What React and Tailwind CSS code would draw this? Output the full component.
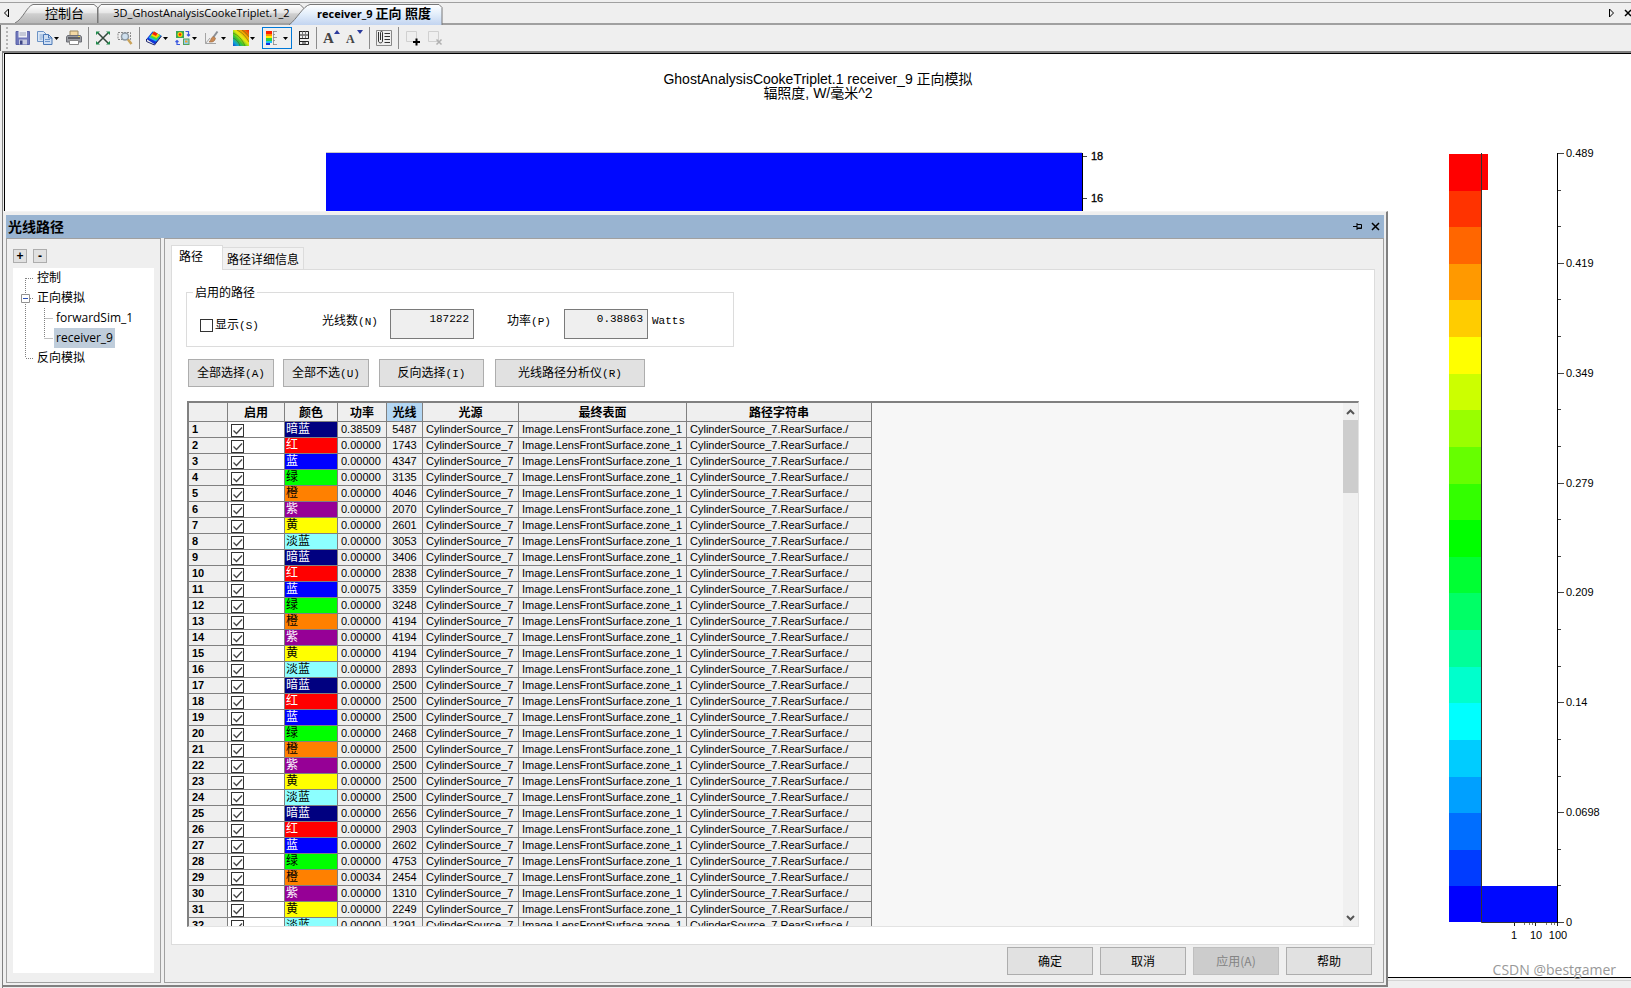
const COLORS = [
  { name: '暗蓝', cell: 'bg-[#000080] text-white' },
  { name: '红', cell: 'bg-[#ff0000] text-white' },
  { name: '蓝', cell: 'bg-[#0000ff] text-white' },
  { name: '绿', cell: 'bg-[#00ff00] text-black' },
  { name: '橙', cell: 'bg-[#ff8000] text-black' },
  { name: '紫', cell: 'bg-[#960096] text-white' },
  { name: '黄', cell: 'bg-[#ffff00] text-black' },
  { name: '淡蓝', cell: 'bg-[#8cffff] text-black' },
]

const RAYS = [
  5487, 1743, 4347, 3135, 4046, 2070, 2601, 3053, 3406, 2838, 3359, 3248, 4194, 4194, 4194, 2893,
  2500, 2500, 2500, 2468, 2500, 2500, 2500, 2500, 2656, 2903, 2602, 4753, 2454, 1310, 2249, 1291,
]

const POWER = { 1: '0.38509', 11: '0.00075', 29: '0.00034' }

const SCALE = [
  '#ff0000', '#ff3300', '#ff6600', '#ff9900', '#ffcc00', '#ffff00', '#ccff00',
  '#99ff00', '#66ff00', '#33ff00', '#00ff00', '#00ff33', '#00ff66', '#00ff99',
  '#00ffcc', '#00ffff', '#00ccff', '#00a0ff', '#006eff', '#003cff', '#0000ff',
]

const SCALE_LABELS = ['0.489', '0.419', '0.349', '0.279', '0.209', '0.14', '0.0698', '0']

function Caret() {
  return (
    <svg width="7" height="16" viewBox="0 0 7 16">
      <path d="M1 7h5L3.5 10z" fill="#000" />
    </svg>
  )
}

function SaveIcon() {
  return (
    <svg width="16" height="16" viewBox="0 0 16 16">
      <path d="M1 1.500h13.500v13H1z" fill="#6f77bb" stroke="#5a62a8" />
      <rect x="3.500" y="1" width="8.500" height="6.500" fill="#eef0f6" />
      <path d="M4.500 3h6.500M4.500 5h6.500" stroke="#9aa0b8" />
      <rect x="4" y="9.500" width="8" height="5" fill="#c9cce0" />
      <rect x="5" y="10.500" width="2.500" height="4" fill="#3e4685" />
    </svg>
  )
}

function CopyIcon() {
  return (
    <svg width="16" height="16" viewBox="0 0 16 16">
      <path d="M.5 1.500h6l3 3v7h-9z" fill="#dbe7f6" stroke="#6d94c6" />
      <path d="M2.500 5h4M2.500 7h4M2.500 9h3" stroke="#86a8d4" />
      <path d="M6.500 4.500h5l3.500 3.500v6.500H6.500z" fill="#cfdff4" stroke="#4a78b6" />
      <path d="M11.500 4.500V8H15" fill="none" stroke="#4a78b6" />
      <path d="M8 9.500h5M8 11.500h5" stroke="#6f97cc" />
    </svg>
  )
}

function PrinterIcon() {
  return (
    <svg width="16" height="16" viewBox="0 0 16 16">
      <path d="M4 1h8v5H4z" fill="#f3d9a4" stroke="#9b8a63" />
      <path d="M1.500 5.500h13l1 1.500v5H.5V7z" fill="#9a9ca2" stroke="#6d6f76" />
      <path d="M2 8h12" stroke="#4a4c52" strokeWidth="1.500" />
      <path d="M3.500 10.500h9v4h-9z" fill="#fff" stroke="#888" />
      <rect x="12" y="6" width="2" height="1" fill="#e6d25c" />
    </svg>
  )
}

function FitIcon() {
  return (
    <svg width="16" height="16" viewBox="0 0 16 16" fill="none">
      <path d="M3 3l10 10M13 3L3 13" stroke="#33483c" strokeWidth="1.500" />
      <path d="M1 1.500h4L1 5zM15 1.500V5l-4-3.500zM1 14.500V11l4 3.500zM15 14.500h-4l4-3.500z" fill="#1e8a4a" />
    </svg>
  )
}

function ZoomAreaIcon() {
  return (
    <svg width="16" height="16" viewBox="0 0 16 16" fill="none">
      <path d="M1 2.500h12.500v7H1z" stroke="#888" strokeDasharray="2 1" />
      <circle cx="8" cy="6.500" r="3.500" fill="#cfe0ee" stroke="#8d98a2" strokeWidth="1.500" />
      <path d="M11 9.500l3.500 4.500" stroke="#c9a35b" strokeWidth="2.500" />
    </svg>
  )
}

function SurfaceIcon() {
  return (
    <svg width="16" height="16" viewBox="0 0 16 16">
      <path d="M.5 9l6-7.500 9 4L9 14.500z" fill="#1233d6" />
      <path d="M2.500 8l5-6.500 7.500 4-5 6z" fill="#18b4f0" />
      <path d="M4 7l4-5.500 6.500 4L10.500 10z" fill="#3fdc3a" />
      <path d="M5 5.500l3-4 5.500 3.500-3 3z" fill="#ffd400" />
      <path d="M6 4l2-2.500 3.500 2L10 6z" fill="#f02010" />
      <path d="M.5 9v2.500l8 3.500 7-9" fill="none" stroke="#20286a" />
    </svg>
  )
}

function SpotsIcon() {
  return (
    <svg width="16" height="16" viewBox="0 0 16 16" fill="none">
      <rect x="1" y="1" width="8" height="7" fill="#3aa655" />
      <circle cx="5" cy="4.500" r="2.500" fill="#ffd000" />
      <circle cx="5" cy="4.500" r="1.200" fill="#f02010" />
      <rect x="8.500" y="9" width="5.500" height="5.500" fill="#8fd0ee" stroke="#58a058" />
      <rect x="10" y="10.500" width="2.500" height="2" fill="#f4a030" />
      <path d="M10.500 1.500h3v4M12 4.500l1.500 1.500 1.500-1.500M5 14.500H2v-4M.5 12L2 10.500 3.500 12" stroke="#3a58e0" strokeWidth="1.200" />
    </svg>
  )
}

function BrushIcon() {
  return (
    <svg width="16" height="16" viewBox="0 0 16 16" fill="none">
      <path d="M1.500 3v10.500H12M1.500 13.500L6 8" stroke="#a4a4a4" />
      <path d="M13.500 1.500L9.500 7" stroke="#8a8f96" strokeWidth="2" />
      <path d="M9 6.500l2.500 1.500c-.5 3.500-3 4.500-6.500 4 2-1 1.500-4 4-5.500z" fill="#c98a55" stroke="#8c5a34" strokeWidth=".5" />
    </svg>
  )
}

function ContourIcon() {
  return (
    <svg width="16" height="16" viewBox="0 0 16 16">
      <defs>
        <linearGradient id="contour" x1="1" y1="0" x2="0" y2="1">
          <stop offset="0" stopColor="#e8200c" />
          <stop offset=".25" stopColor="#f59b00" />
          <stop offset=".45" stopColor="#e8ea10" />
          <stop offset=".65" stopColor="#3cc828" />
          <stop offset=".85" stopColor="#10a0d8" />
          <stop offset="1" stopColor="#1440d0" />
        </linearGradient>
      </defs>
      <rect width="16" height="16" fill="url(#contour)" />
      <path d="M0 3c5 2 9 6 12 13M0 8c3 1 6 4 7 8M4 0c6 3 9 7 12 12M9 0c3 2 5 4 7 7" fill="none" stroke="#3c5a10" strokeWidth=".5" />
    </svg>
  )
}

function ColorBarIcon() {
  return (
    <svg width="14" height="16" viewBox="0 0 14 16">
      <rect x="1" y="1" width="6" height="3" fill="#ff2000" />
      <rect x="1" y="4" width="6" height="2" fill="#ff9000" />
      <rect x="1" y="6" width="6" height="2" fill="#fff000" />
      <rect x="1" y="8" width="6" height="3" fill="#30d040" />
      <rect x="1" y="11" width="6" height="2" fill="#20c0f0" />
      <rect x="1" y="13" width="4" height="2" fill="#1830e0" />
      <path d="M8.500 1v14M8 1.500h4M8 4.500h2M8 7.500h4M8 10.500h2M8 14.500h4" stroke="#888" strokeWidth=".8" />
    </svg>
  )
}

function GridIcon() {
  return (
    <svg width="12" height="16" viewBox="0 0 12 16" fill="none" stroke="#222">
      <path d="M1.500 1v14M1.500 1.500h9v7h-9M1.500 5h9" />
      <path d="M4.500 1.500v7M7.500 1.500v7" stroke="#777" />
      <path d="M1.500 11.500h9v3h-9M4 13h4M1.500 8.500h9" />
    </svg>
  )
}

function FontIcon({ small }) {
  return (
    <span className="relative flex h-4 w-[17px] items-end font-['Liberation_Serif',serif] font-bold text-[#444]">
      <span className={small ? 'text-[12px] leading-[13px]' : 'text-[15px] leading-[15px]'}>A</span>
      <svg className="absolute right-0 top-0" width="6" height="4" viewBox="0 0 6 4">
        <path d={small ? 'M0 0h6L3 4z' : 'M0 4h6L3 0z'} fill="#2b3a9c" />
      </svg>
    </span>
  )
}

function ClipIcon() {
  return (
    <svg width="16" height="16" viewBox="0 0 16 16" fill="none" stroke="#333">
      <path d="M.5 .5h15v15H.5z" stroke="#888" />
      <path d="M2.500 2v9c0 2.500 4 2.500 4 0V2.500c0-1.500-2-1.500-2 0V10" />
      <path d="M8.500 3.500H14M8.500 6.500H14M8.500 9.500H14M8.500 12.500H14" />
    </svg>
  )
}

function BoxIcon({ remove }) {
  return (
    <svg width="16" height="16" viewBox="0 0 16 16" fill="none">
      <path d="M1.500 1.500h10v10h-10z" stroke="#d0d0d0" />
      {remove ? (
        <path d="M9.500 9.500l5 5M14.500 9.500l-5 5" stroke="#b0b0b0" strokeWidth="1.500" />
      ) : (
        <path d="M8 12h7M11.500 8.500v7" stroke="#000" strokeWidth="2" />
      )}
    </svg>
  )
}

function ToolButton({ label, menu, children }) {
  return (
    <button type="button" aria-label={label} className="flex h-5 shrink-0 items-center">
      {children}
      {menu && <Caret />}
    </button>
  )
}

function Separator() {
  return <span className="h-[22px] w-px shrink-0 bg-[#8c8c8c]" />
}

function Toolbar() {
  return (
    <div className="flex h-[26px] items-center gap-1.5 border-l border-[#696969] bg-[#efefef] pb-px pl-[5px]">
      <span className="h-[22px] w-[3px] border-l-2 border-dotted border-[#b4b4b4]" />
      <ToolButton label="保存"><SaveIcon /></ToolButton>
      <ToolButton label="复制" menu><CopyIcon /></ToolButton>
      <ToolButton label="打印"><PrinterIcon /></ToolButton>
      <Separator />
      <ToolButton label="全部缩放"><FitIcon /></ToolButton>
      <ToolButton label="窗口缩放"><ZoomAreaIcon /></ToolButton>
      <Separator />
      <ToolButton label="曲面" menu><SurfaceIcon /></ToolButton>
      <ToolButton label="映射" menu><SpotsIcon /></ToolButton>
      <ToolButton label="绘制" menu><BrushIcon /></ToolButton>
      <ToolButton label="等高线" menu><ContourIcon /></ToolButton>
      <button
        type="button"
        aria-label="色标"
        className="flex h-[22px] w-[30px] shrink-0 items-center justify-between border border-[#0078d7] bg-[#efefef] px-[2px]"
      >
        <ColorBarIcon />
        <Caret />
      </button>
      <ToolButton label="网格"><GridIcon /></ToolButton>
      <Separator />
      <ToolButton label="增大字体"><FontIcon /></ToolButton>
      <ToolButton label="减小字体"><FontIcon small /></ToolButton>
      <Separator />
      <ToolButton label="属性"><ClipIcon /></ToolButton>
      <Separator />
      <ToolButton label="添加"><BoxIcon /></ToolButton>
      <ToolButton label="移除"><BoxIcon remove /></ToolButton>
    </div>
  )
}

function TabStrip() {
  return (
    <div className="flex h-[25px] items-stretch border-b-2 border-[#a0a0a0] bg-[#efefef] pt-[2px] font-['Open_Sans','Noto_Sans_CJK_SC',sans-serif] text-[11px]">
      <div className="flex grow border-t border-[#a0a0a0]">
        <button type="button" aria-label="向左滚动" className="w-[15px] pl-[3px]">
          <svg width="7" height="10" viewBox="0 0 7 10">
            <path d="M5.500 1v8L1.500 5z" fill="none" stroke="#000" />
          </svg>
        </button>
        <button type="button" className="relative w-[83px] pl-4 text-[13px] leading-[18px]">
          <svg className="absolute inset-0" width="83" height="20" viewBox="0 0 83 20">
            <defs>
              <linearGradient id="tab" x1="0" y1="0" x2="0" y2="1">
                <stop offset="0" stopColor="#fff" />
                <stop offset=".45" stopColor="#e6e6e6" />
                <stop offset=".5" stopColor="#d0d0d0" />
                <stop offset="1" stopColor="#b8b8b8" />
              </linearGradient>
            </defs>
            <path d="M0 20C8 16 12 3 18 1.500H79l3.500 3V20" fill="url(#tab)" stroke="#787878" />
          </svg>
          <span className="relative">控制台</span>
        </button>
        <button type="button" className="relative w-[207px] text-[11px] leading-[18px]">
          <svg className="absolute inset-0" width="207" height="20" viewBox="0 0 207 20">
            <path d="M0 20V5l3-3.500H202l4 4V20" fill="url(#tab)" stroke="#787878" />
          </svg>
          <span className="relative">3D_GhostAnalysisCookeTriplet.1_2</span>
        </button>
        <button type="button" className="relative -ml-4 w-[154px] pl-4 font-bold leading-[18px]">
          <svg className="absolute inset-0" width="154" height="22" viewBox="0 0 154 22">
            <defs>
              <linearGradient id="tabActive" x1="0" y1="0" x2="0" y2="1">
                <stop offset="0" stopColor="#fff" />
                <stop offset=".45" stopColor="#e4effb" />
                <stop offset="1" stopColor="#c2d4f0" />
              </linearGradient>
            </defs>
            <path d="M0 22C8 16 14 3 21 1.500H150l3 3V22" fill="url(#tabActive)" stroke="#787878" />
          </svg>
          <span className="relative">
            receiver_9 <span className="text-[13px]">正向 照度</span>
          </span>
        </button>
        <span className="grow" />
        <button type="button" aria-label="向右滚动" className="w-4">
          <svg width="7" height="10" viewBox="0 0 7 10">
            <path d="M1.500 1v8l4-4z" fill="none" stroke="#000" />
          </svg>
        </button>
        <button type="button" aria-label="关闭标签" className="w-[7px] overflow-hidden">
          <svg className="max-w-none" width="8" height="8" viewBox="0 0 8 8">
            <path d="M1 1l6 6M7 1L1 7" stroke="#000" strokeWidth="1.500" />
          </svg>
        </button>
      </div>
    </div>
  )
}

function IrradiancePlot() {
  return (
    <svg width="800" height="780" viewBox="0 0 800 780" className="shrink-0 overflow-visible font-['Liberation_Sans',sans-serif] text-[11px]">
      <path d="M1 -.5h756" stroke="#c8c8c8" />
      <rect x="1" width="756" height="757" fill="#0008ff" />
      <path d="M757.500 0v757" stroke="#000" />
      <path d="M758 3.500h4M758 45.500h4" stroke="#444" />
      <text x="766" y="7" stroke="#000" strokeWidth=".3">18</text>
      <text x="766" y="49" stroke="#000" strokeWidth=".3">16</text>
    </svg>
  )
}

function ColorScale() {
  const step = 769 / 21
  const logTicks = [3, 5, 7].flatMap((n) => [65 + 21.5 * Math.log10(n), 86.5 + 21.5 * Math.log10(n)])
  return (
    <svg width="182" height="800" viewBox="0 0 182 800" className="shrink-0 overflow-visible font-['Liberation_Sans',sans-serif] text-[11px]">
      {SCALE.map((color, i) => (
        <rect key={color} y={Math.round(1 + i * step)} width="32" height={i === 20 ? 36 : 37} fill={color} />
      ))}
      <rect x="33" y="1" width="6" height="36" fill="#ff0000" />
      <rect x="33" y="733" width="75" height="36" fill="#0008ff" />
      <path d="M32.500 0v769.500h76" fill="none" stroke="#000" strokeOpacity=".8" />
      <path d="M108.500 0v770" stroke="#000" />
      {SCALE.concat('end').map((key, i) => (
        <path key={key} d={`M109 ${Math.round(i * step) + 0.5}h${i % 3 ? 3 : 6}`} stroke="#444" />
      ))}
      {SCALE_LABELS.map((label, i) => (
        <text key={label} x="117" y={Math.round(i * 3 * step) + 4}>{label}</text>
      ))}
      {logTicks.map((x) => (
        <path key={x} d={`M${Math.round(x) + 0.5} 770v2`} stroke="#777" />
      ))}
      <path d="M65.500 770v3M86.500 770v3M108.500 770v3" stroke="#222" />
      <text x="65" y="786" textAnchor="middle">1</text>
      <text x="87" y="786" textAnchor="middle">10</text>
      <text x="109" y="786" textAnchor="middle">100</text>
    </svg>
  )
}

function Check({ id, checked }) {
  return (
    <span className="relative inline-block size-[13px] align-top">
      <input
        id={id}
        type="checkbox"
        aria-label={checked ? '启用' : undefined}
        defaultChecked={checked}
        className="peer block size-[13px] appearance-none border border-[#333] bg-white"
      />
      <svg className="pointer-events-none invisible absolute inset-0 peer-checked:visible" width="13" height="13" viewBox="0 0 13 13">
        <path d="M2.500 6.500l3 3 5.500-6" fill="none" stroke="#444" strokeWidth="1.300" />
      </svg>
    </span>
  )
}

// access key in the narrower fixed-width face
function Key({ children }) {
  return <span className="font-['Liberation_Mono',monospace] text-[11px]">({children})</span>
}

function Branch({ child, box, top, bottom }) {
  return (
    <svg width={child ? 41 : 22} height="20" viewBox={child ? '0 0 41 20' : '0 0 22 20'} className="shrink-0" fill="none" stroke="#808080" strokeDasharray="1 1">
      <path d={`M12.500 ${top ? 0 : 10}V${bottom ? 20 : 10}`} />
      {child ? (
        <path d={`M31.500 0V${child === 'last' ? 10 : 20}M31.500 10.500H40`} />
      ) : (
        <path d="M13 10.500h8" />
      )}
      {box && <path d="M8.500 6.500h8v8h-8z" fill="#fff" stroke="#919191" strokeDasharray="none" />}
      {box && <path d="M10 10.500h5" stroke="#2b50b4" strokeDasharray="none" />}
    </svg>
  )
}

function TreeItem({ label, selected, ...branch }) {
  return (
    <li className="flex h-5 items-center">
      <Branch {...branch} />
      <a href="#" className={selected ? 'bg-[#bfcddb] px-[2px] leading-5' : 'px-[2px] leading-5'}>{label}</a>
    </li>
  )
}

function PathTree() {
  return (
    <div className="flex w-[155px] shrink-0 flex-col border border-[#a0a0a0] px-1.5 pb-[9px] pt-2.5">
      <div className="flex gap-1.5 font-['Liberation_Sans',sans-serif] text-[12px] font-bold">
        <button type="button" className="size-[14px] border border-[#adadad] bg-[#e1e1e1] leading-3">+</button>
        <button type="button" className="size-[14px] border border-[#adadad] bg-[#e1e1e1] leading-3">-</button>
      </div>
      <ul className="mt-[5px] grow bg-white font-['Open_Sans','Noto_Sans_CJK_SC',sans-serif] text-[12px]">
        <TreeItem label="控制" bottom />
        <TreeItem label="正向模拟" box top bottom />
        <TreeItem label="forwardSim_1" child="mid" top bottom />
        <TreeItem label="receiver_9" child="last" top bottom selected />
        <TreeItem label="反向模拟" top />
      </ul>
    </div>
  )
}

function PushButton({ className, disabled, children }) {
  return (
    <button
      type="button"
      disabled={disabled}
      className={`h-7 border border-[#adadad] bg-[#e1e1e1] disabled:border-[#bfbfbf] disabled:bg-[#cccccc] disabled:text-[#838383] ${className}`}
    >
      {children}
    </button>
  )
}

function EnabledPaths() {
  const field = "h-[30px] w-[84px] border border-[#7a7a7a] bg-[#efefef] px-1 pb-2.5 text-right font-['Liberation_Mono',monospace] text-[11px]"
  return (
    <fieldset className="ml-[14px] w-[548px] border border-[#dcdcdc] pb-[7px] pl-[13px] pt-[9px]">
      <legend className="-ml-[7px] px-[2px] leading-4">启用的路径</legend>
      <div className="flex items-center">
        <label htmlFor="show" className="flex w-[122px] items-center gap-[2px] pt-[2px] leading-4">
          <Check id="show" />
          <span>显示<Key>S</Key></span>
        </label>
        <label htmlFor="rays" className="w-[68px] pb-1.5 leading-4">光线数<Key>N</Key></label>
        <input id="rays" readOnly defaultValue="187222" className={field} />
        <label htmlFor="power" className="ml-[33px] w-[57px] pb-1.5 leading-4">功率<Key>P</Key></label>
        <input id="power" readOnly defaultValue="0.38863" className={field} />
        <span className="pb-1.5 pl-1 font-['Liberation_Mono',monospace] text-[11px] leading-4">Watts</span>
      </div>
    </fieldset>
  )
}

function PathTable() {
  const cell = 'overflow-hidden border-b border-r border-[#808080] px-[3px] py-0 whitespace-nowrap'
  const head = 'overflow-hidden border-b border-r border-[#808080] px-[3px] pt-[2px] pb-0 text-center text-[12px] whitespace-nowrap'
  return (
    <table className="w-[683px] shrink-0 table-fixed border-separate border-spacing-0 self-start bg-[#efefef] font-['Liberation_Sans','Noto_Sans_CJK_SC',sans-serif] text-[11px] leading-[15px]">
      <colgroup>
        <col className="w-[39px]" />
        <col className="w-[57px]" />
        <col className="w-[53px]" />
        <col className="w-[49px]" />
        <col className="w-[36px]" />
        <col className="w-[96px]" />
        <col className="w-[168px]" />
        <col className="w-[185px]" />
      </colgroup>
      <thead>
        <tr className="h-[19px]">
          <th className={cell} />
          <th className={head}>启用</th>
          <th className={head}>颜色</th>
          <th className={head}>功率</th>
          <th className={`${head} bg-[#b4d7f3]`}>光线</th>
          <th className={head}>光源</th>
          <th className={head}>最终表面</th>
          <th className={head}>路径字符串</th>
        </tr>
      </thead>
      <tbody>
        {RAYS.map((rays, i) => {
          const color = COLORS[i % COLORS.length]
          return (
            <tr key={i} className="h-4">
              <th className={`${cell} text-left`}>{i + 1}</th>
              <td className="h-4 border-b border-r border-[#808080] bg-white p-0 pl-[3px]">
                <div className="h-[15px] pt-[2px] leading-3"><Check checked /></div>
              </td>
              <td className={`overflow-hidden border-b border-r border-[#808080] px-px py-0 text-[12px] ${color.cell}`}>
                <div className="h-[15px] leading-[15px]">{color.name}</div>
              </td>
              <td className={cell}>{POWER[i + 1] || '0.00000'}</td>
              <td className={`${cell} text-center`}>{rays}</td>
              <td className={cell}>CylinderSource_7</td>
              <td className={cell}>Image.LensFrontSurface.zone_1</td>
              <td className={cell}>CylinderSource_7.RearSurface./</td>
            </tr>
          )
        })}
      </tbody>
    </table>
  )
}

function ScrollBar() {
  return (
    <div className="ml-auto flex w-[15px] flex-col items-center bg-[#f0f0f0]">
      <button type="button" aria-label="向上" className="h-[17px]">
        <svg width="9" height="6" viewBox="0 0 9 6">
          <path d="M1 5l3.500-3.500L8 5" fill="none" stroke="#555" strokeWidth="2" />
        </svg>
      </button>
      <div className="h-[73px] w-full bg-[#cdcdcd]" />
      <button type="button" aria-label="向下" className="mt-auto h-[17px]">
        <svg width="9" height="6" viewBox="0 0 9 6">
          <path d="M1 1l3.500 3.500L8 1" fill="none" stroke="#555" strokeWidth="2" />
        </svg>
      </button>
    </div>
  )
}

function PathsDialog() {
  return (
    <section className="absolute bottom-px left-[3px] top-[211px] flex w-[1385px] flex-col border-b-2 border-r-2 border-t border-b-[#808080] border-r-[#808080] border-t-[#f4f4f4] bg-[#efefef] pb-[2px] pl-[3px] pr-[2px] pt-[3px] font-['Noto_Sans_CJK_SC',sans-serif] text-[12px]">
      <header className="flex h-[23px] shrink-0 items-center gap-2 bg-[#99b4d1] pl-[2px] pr-1">
        <h2 className="grow pb-[2px] text-[14px] font-bold leading-5">光线路径</h2>
        <button type="button" aria-label="固定">
          <svg width="10" height="9" viewBox="0 0 10 9" fill="none" stroke="#000">
            <path d="M0 4.500h4M4 1v7M4 2.500h4.500v4H4" />
            <path d="M4 6h4.500" />
          </svg>
        </button>
        <button type="button" aria-label="关闭">
          <svg width="9" height="9" viewBox="0 0 9 9">
            <path d="M1 1l7 7M8 1L1 8" stroke="#000" strokeWidth="1.500" />
          </svg>
        </button>
      </header>
      <div className="flex min-h-0 grow gap-[3px]">
        <PathTree />
        <div className="flex min-w-0 grow flex-col border border-[#a0a0a0] px-1.5 pb-[7px] pt-1.5">
          <div role="tablist" className="flex items-end">
            <button type="button" role="tab" className="relative z-10 -mb-px h-[25px] w-[52px] border border-b-0 border-[#dcdcdc] bg-white pb-1 pl-[7px] text-left leading-4">
              路径
            </button>
            <button type="button" role="tab" className="h-[22px] w-[81px] border border-b-0 border-l-0 border-[#dcdcdc] bg-[#f2f2f2] leading-4">
              路径详细信息
            </button>
          </div>
          <div className="mr-[2px] flex min-h-0 grow flex-col border border-[#dcdcdc] bg-white pb-[17px] pt-[14px]">
            <EnabledPaths />
            <div className="ml-4 mt-3 flex shrink-0">
              <PushButton className="mr-[9px] w-[86px]">全部选择<Key>A</Key></PushButton>
              <PushButton className="mr-[10px] w-[86px]">全部不选<Key>U</Key></PushButton>
              <PushButton className="mr-[11px] w-[105px]">反向选择<Key>I</Key></PushButton>
              <PushButton className="w-[150px]">光线路径分析仪<Key>R</Key></PushButton>
            </div>
            <div className="ml-[15px] mr-[15px] mt-[14px] flex min-h-0 grow overflow-hidden border-b border-l-2 border-r border-t-2 border-b-[#e3e3e3] border-l-[#808080] border-r-[#e3e3e3] border-t-[#808080] bg-[#f7f7f7]">
              <PathTable />
              <ScrollBar />
            </div>
          </div>
          <footer className="mr-[5px] mt-[2px] flex shrink-0 justify-end gap-[7px]">
            <PushButton className="w-[86px]">确定</PushButton>
            <PushButton className="w-[86px]">取消</PushButton>
            <PushButton className="w-[86px]" disabled>应用(A)</PushButton>
            <PushButton className="w-[86px]">帮助</PushButton>
          </footer>
        </div>
      </div>
    </section>
  )
}

export default function App() {
  return (
    <div className="relative flex h-screen flex-col overflow-hidden bg-[#efefef] text-black">
      <TabStrip />
      <Toolbar />
      <main className="ml-[2px] flex min-h-0 grow flex-col overflow-hidden border-l border-t-2 border-[#808080]">
        <div className="ml-px flex min-h-0 grow flex-col overflow-hidden border-b border-l border-t border-black bg-white">
          <h1 className="pt-[18px] text-center font-['Liberation_Sans','Noto_Sans_CJK_SC',sans-serif] text-[14px] leading-[14px]">
            GhostAnalysisCookeTriplet.1 receiver_9 正向模拟
            <br />
            辐照度, W/毫米^2
          </h1>
          <div className="mt-[53px] flex items-start justify-between pl-[320px]">
            <IrradiancePlot />
            <ColorScale />
          </div>
        </div>
        <div className="mt-[2px] h-2 shrink-0 border-t border-[#d4d4d4]" />
      </main>
      <PathsDialog />
      <p className="absolute bottom-1.5 right-[15px] font-['Open_Sans',sans-serif] text-[14px] leading-6 text-[#999]">CSDN @bestgamer</p>
    </div>
  )
}
